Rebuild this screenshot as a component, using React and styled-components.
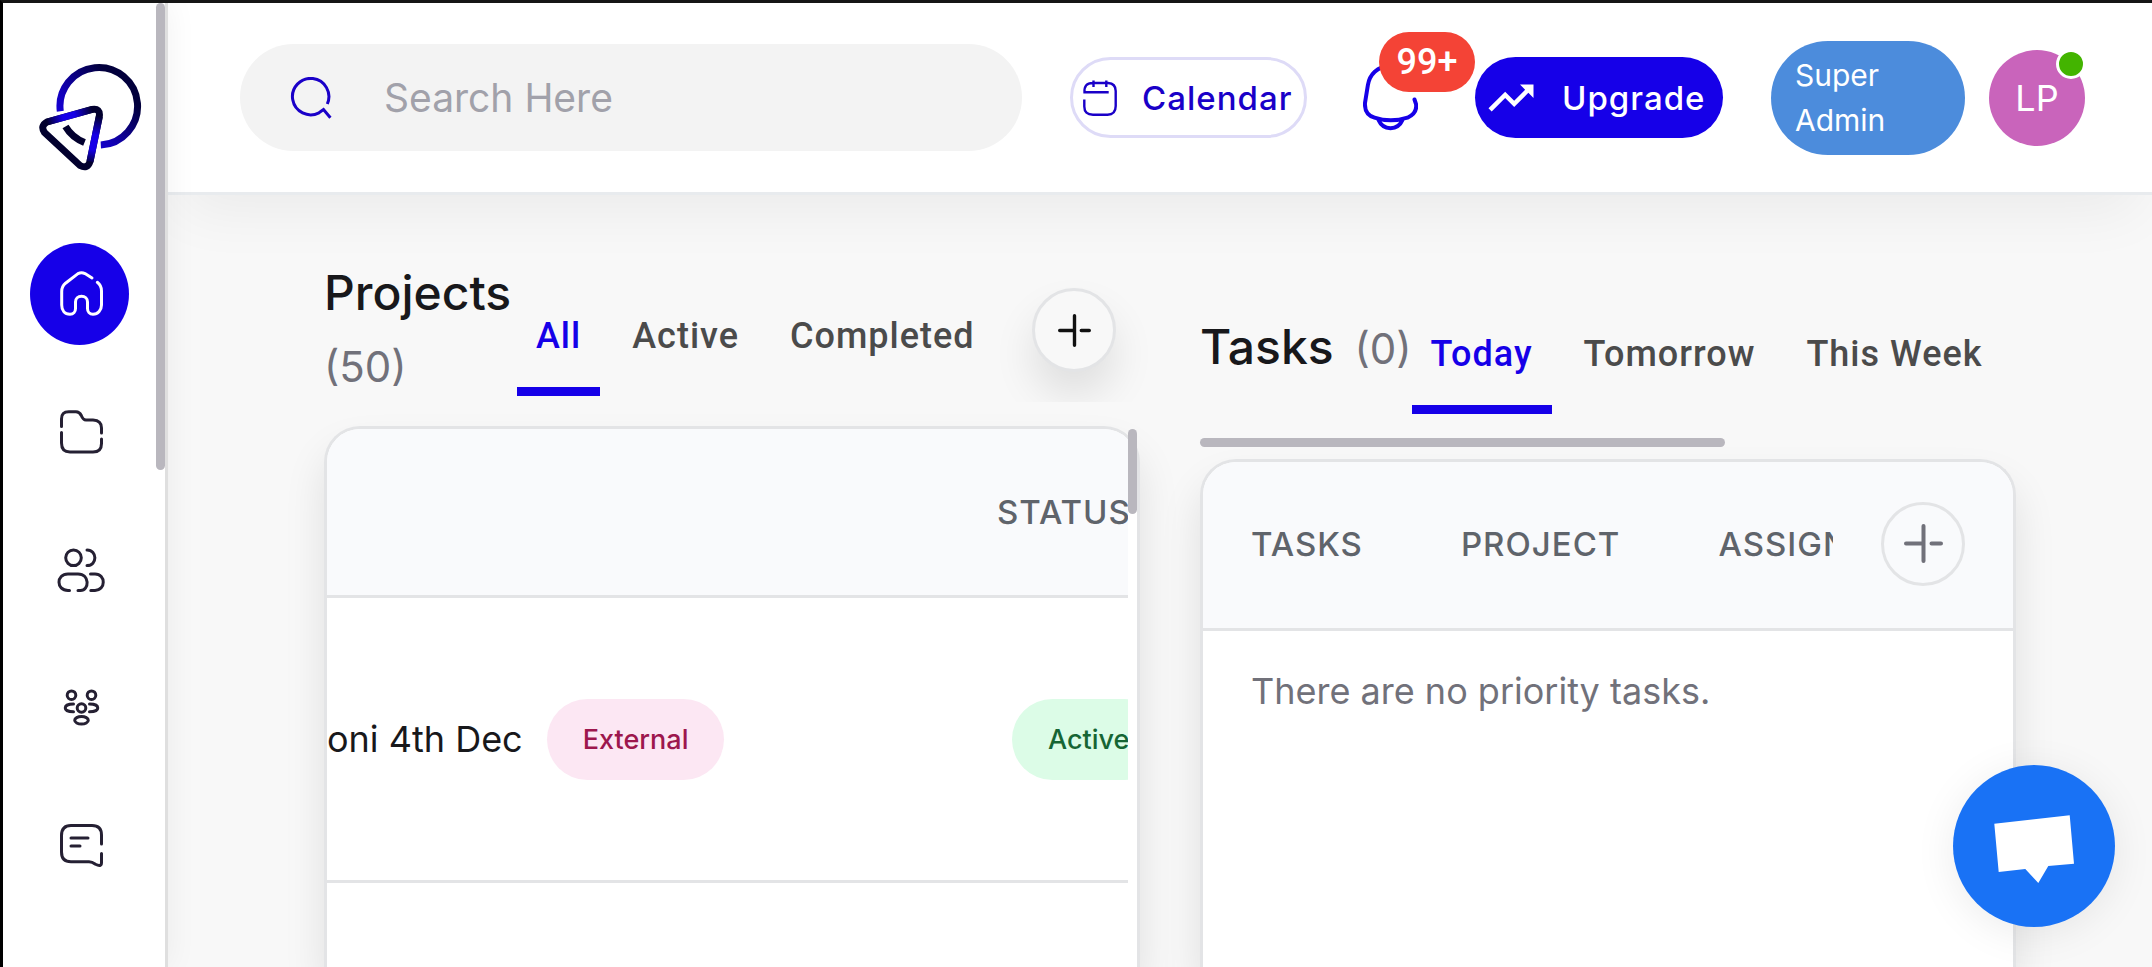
import React, { useState } from 'react';
import styled, { createGlobalStyle } from 'styled-components';

const projectTabs = ['All', 'Active', 'Completed'];
const taskTabs = ['Today', 'Tomorrow', 'This Week'];

const LogoIcon = () => (
  <svg width='132' height='108' viewBox='0 0 132 108' fill='none'>
    <defs>
      <linearGradient
        id='ring'
        gradientUnits='userSpaceOnUse'
        x1='52'
        y1='74'
        x2='112'
        y2='18'
      >
        <stop offset='0' stopColor='#1600e8' />
        <stop offset='0.35' stopColor='#1200b8' />
        <stop offset='0.9' stopColor='#02003c' />
      </linearGradient>
      <linearGradient
        id='topEdge'
        gradientUnits='userSpaceOnUse'
        x1='33'
        y1='59'
        x2='78'
        y2='46'
      >
        <stop offset='0' stopColor='#02002e' />
        <stop offset='0.35' stopColor='#1600e8' />
        <stop offset='0.6' stopColor='#1600e8' />
        <stop offset='1' stopColor='#02002e' />
      </linearGradient>
      <linearGradient
        id='rightEdge'
        gradientUnits='userSpaceOnUse'
        x1='85'
        y1='53'
        x2='75'
        y2='101'
      >
        <stop offset='0' stopColor='#02002e' />
        <stop offset='0.4' stopColor='#1600e8' />
        <stop offset='0.7' stopColor='#1600e8' />
        <stop offset='1' stopColor='#02002e' />
      </linearGradient>
    </defs>
    <path
      d='M46.3 48.3A38.8 38.8 0 1 1 86.8 82'
      stroke='url(#ring)'
      strokeWidth='7'
    />
    <path
      d='M33 59 78 46.5Q86.5 45 85.3 53.5L76 98.5Q73.5 106.5 66 102.5L30.5 69.5Q26 63 33 59Z'
      stroke='#02002e'
      strokeWidth='7'
    />
    <path d='M33 59 78 46.5' stroke='url(#topEdge)' strokeWidth='7' />
    <path d='M85.3 53.5 76 98.5' stroke='url(#rightEdge)' strokeWidth='7' />
    <path d='M51.5 63.5Q58 74.5 70.5 79.5' stroke='#02002e' strokeWidth='7' />
  </svg>
);

const HomeIcon = () => (
  <NavSvg viewBox='0 0 48 48'>
    <path d='M36 8 29 3.6Q25.5 1.8 22 3.6L9.5 13.2Q5.7 16.5 5.7 21.5V35C5.7 40 8.5 44.3 14 44.3 17.5 44.3 19.5 41.5 19.5 38.5V32C19.5 28.5 22 26.3 25.5 26.3 29 26.3 31.5 28.5 31.5 32V38.5C31.5 41.5 33.5 44.3 37 44.3 42 44.3 45.5 40 45.5 35V21Q45.5 15.5 41.3 12.3' />
  </NavSvg>
);

const FolderIcon = () => (
  <NavSvg viewBox='0 0 48 48'>
    <path d='M5.5 18.5V11Q5.5 3.7 12.8 3.7H20Q23.5 3.7 25.3 7.5 27 12 30 12H37Q45.5 12.5 45.5 20V25' />
    <path d='M45.5 31V35.5Q45.5 44 37 44H14Q5.5 44 5.5 35V24.5' />
  </NavSvg>
);

const PeopleIcon = () => (
  <NavSvg viewBox='0 0 48 48'>
    <circle cx='17.5' cy='11.8' r='7.8' />
    <path d='M31 4C41.5 4 41.5 19.6 31 19.6' />
    <path d='M13.5 44.4H12C0 44.4 0 28 12 28H22C34 28 33.5 44.4 24.5 44.4H22' />
    <path d='M34.5 28H39C50 28 50 44.4 39 44.4H34.8' />
  </NavSvg>
);

const GroupIcon = () => (
  <NavSvg viewBox='0 0 48 48'>
    <circle cx='15.5' cy='11.2' r='4.3' />
    <circle cx='35.5' cy='11.2' r='4.3' />
    <circle cx='25.5' cy='24' r='4.3' />
    <ellipse cx='25.5' cy='36.3' rx='6.8' ry='3.8' />
    <path d='M17.5 20C6.5 20 6.5 27.8 17.5 27.8' />
    <path d='M33.5 20C44.5 20 44.5 27.8 33.5 27.8' />
  </NavSvg>
);

const MessageIcon = () => (
  <NavSvg viewBox='0 0 48 48'>
    <path d='M45.5 22V13Q45.5 3.5 36 3.5H15Q5.5 3.5 5.5 13.5V30Q5.5 39.8 15 39.8H33Q36 39.8 39.5 42.3 45.5 45.5 45.5 40.5V31.5' />
    <path d='M15 16H32M15 24H24' />
  </NavSvg>
);

const SearchIcon = () => (
  <svg width='42' height='42' viewBox='0 0 42 42' fill='none' aria-hidden='true'>
    <path
      d='M37.3 27A18.2 18.2 0 1 0 29 35.8L33.5 32.5 40.4 40.7'
      stroke='#1a00c8'
      strokeWidth='3'
    />
  </svg>
);

const CalendarIcon = () => (
  <svg width='36' height='36' viewBox='-1 0 36 36' fill='none'>
    <path
      d='M25.7 12.3H1.5Q1 3 9.5 3H25Q32.7 3.5 32.7 11V26Q32.7 34.5 24.5 34.7H10Q1.3 34.7 1.3 26.5V19.5M10.5 0.5V7M23.3 0.5V7'
      stroke='currentColor'
      strokeWidth='2.4'
    />
  </svg>
);

const BellIcon = () => (
  <svg width='55' height='75' viewBox='0 0 55 75' fill='none'>
    <path
      d='M27.5 6C14 6 6.5 15 4.9 25L2 43Q1.3 54.5 11.5 57.7 27.5 63 44.5 57.7 54.5 53 53 44L51.5 39.5M15.5 60Q19 68 27.5 68.3 36 68 39.5 60'
      stroke='#1600e8'
      strokeWidth='4'
      strokeLinecap='round'
    />
  </svg>
);

const TrendingUpIcon = () => (
  <svg width='54' height='54' viewBox='0 0 24 24' fill='currentColor'>
    <path d='m16 6 2.29 2.29-4.88 4.88-4-4L2 16.59 3.41 18l6-6 4 4 6.3-6.29L22 12V6z' />
  </svg>
);

const PlusIcon = ({ size }) => (
  <svg width={size} height={size} viewBox='0 0 39 39' fill='none'>
    <path
      d='M19.5 2V37M2 19.5H19.5M27.5 19.5H37'
      stroke='currentColor'
      strokeWidth='4'
      strokeLinecap='round'
    />
  </svg>
);

const ChatIcon = () => (
  <svg width='162' height='162' viewBox='0 0 162 162' fill='#fff'>
    <path d='M41.3 58.7 116.7 50.3 121 98.7 95.3 101 85.3 118 72.3 104 45.7 107Z' />
  </svg>
);

const navItems = [
  { label: 'Home', icon: <HomeIcon /> },
  { label: 'Projects', icon: <FolderIcon /> },
  { label: 'Clients', icon: <PeopleIcon /> },
  { label: 'Teams', icon: <GroupIcon /> },
  { label: 'Messages', icon: <MessageIcon /> },
];

const Sidebar = () => (
  <SidebarBox>
    <SidebarInner>
      <LogoLink href='#' aria-label='Dashboard'>
        <LogoIcon />
      </LogoLink>
      <Nav>
        {navItems.map((item, index) => (
          <NavLink
            key={item.label}
            href='#'
            aria-label={item.label}
            $active={index === 0}
          >
            {item.icon}
          </NavLink>
        ))}
      </Nav>
    </SidebarInner>
    <SidebarTrack>
      <SidebarThumb />
    </SidebarTrack>
  </SidebarBox>
);

const Header = () => {
  const [search, setSearch] = useState('');

  return (
    <HeaderBox>
      <SearchBox>
        <SearchIcon />
        <SearchInput
          type='text'
          aria-label='Search'
          placeholder='Search Here'
          value={search}
          onChange={(event) => setSearch(event.target.value)}
        />
      </SearchBox>
      <CalendarBtn type='button'>
        <CalendarIcon />
        Calendar
      </CalendarBtn>
      <BellBtn type='button' aria-label='Notifications'>
        <BellIcon />
        <Badge>99+</Badge>
      </BellBtn>
      <UpgradeBtn type='button'>
        <TrendingUpIcon />
        Upgrade
      </UpgradeBtn>
      <Role>Super Admin</Role>
      <Avatar type='button'>
        LP
        <OnlineDot />
      </Avatar>
    </HeaderBox>
  );
};

const Tabs = ({ items }) => {
  const [selected, setSelected] = useState(items[0]);

  return (
    <TabList>
      {items.map((item) => (
        <Tab
          key={item}
          type='button'
          $active={item === selected}
          onClick={() => setSelected(item)}
        >
          {item}
        </Tab>
      ))}
    </TabList>
  );
};

const Projects = () => (
  <Panel>
    <ProjectsHead>
      <ProjectsTitle>
        Projects <Count>(50)</Count>
      </ProjectsTitle>
      <Tabs items={projectTabs} />
      <AddBtn type='button' aria-label='Add project' $raised>
        <PlusIcon size={33} />
      </AddBtn>
    </ProjectsHead>
    <CardArea>
      <Card>
        <TableClip>
          <ProjectTable>
            <colgroup>
              <col />
              <StatusCol />
            </colgroup>
            <thead>
              <tr>
                <HeadCell aria-label='Name' />
                <HeadCell>STATUS</HeadCell>
              </tr>
            </thead>
            <tbody>
              <tr>
                <Cell>
                  <NameBox>
                    oni 4th Dec
                    <Pill $color='#9d174d' $bg='#fce7f3'>
                      External
                    </Pill>
                  </NameBox>
                </Cell>
                <StatusCell>
                  <Pill $color='#166534' $bg='#dcfce7'>
                    Active
                  </Pill>
                </StatusCell>
              </tr>
            </tbody>
          </ProjectTable>
        </TableClip>
      </Card>
      <TableThumb />
    </CardArea>
  </Panel>
);

const Tasks = () => (
  <Panel>
    <TasksHead>
      <Title>
        Tasks <Count $spaced>(0)</Count>
      </Title>
      <Tabs items={taskTabs} />
    </TasksHead>
    <TasksThumb />
    <Card>
      <TasksBar>
        <ColumnsClip>
          <table>
            <thead>
              <tr>
                <TaskColumn>TASKS</TaskColumn>
                <TaskColumn>PROJECT</TaskColumn>
                <TaskColumn>ASSIGNEE</TaskColumn>
              </tr>
            </thead>
          </table>
        </ColumnsClip>
        <AddBtn type='button' aria-label='Add task'>
          <PlusIcon size={39} />
        </AddBtn>
      </TasksBar>
      <Empty>There are no priority tasks.</Empty>
    </Card>
  </Panel>
);

const App = () => (
  <>
    <GlobalStyle />
    <Page>
      <Sidebar />
      <Main>
        <Header />
        <Content>
          <Projects />
          <Tasks />
        </Content>
      </Main>
      <ChatBtn type='button' aria-label='Open chat'>
        <ChatIcon />
      </ChatBtn>
    </Page>
  </>
);

export default App;

const GlobalStyle = createGlobalStyle`
  * {
    box-sizing: border-box;
  }
  body {
    margin: 0;
    background: #f8f8f8;
    font-family: Inter, sans-serif;
  }
  button {
    margin: 0;
    padding: 0;
    border: 0;
    background: none;
    font-family: inherit;
    cursor: pointer;
  }
  table {
    border-spacing: 0;
  }
  svg {
    display: block;
    flex: none;
  }
`;

const Page = styled.div`
  display: flex;
  height: 100vh;
  overflow: hidden;
  border-top: 3px solid #151515;
  border-left: 3px solid #000;
`;

const SidebarBox = styled.aside`
  display: flex;
  flex: none;
  width: 165px;
  background: #fff;
  border-right: 3px solid #dfdfdf;
  box-shadow: 0 0 30px rgba(0, 0, 0, 0.06);
  z-index: 2;
`;

const SidebarInner = styled.div`
  flex: 1;
  display: flex;
  flex-direction: column;
  align-items: center;
  padding-top: 60px;
`;

const LogoLink = styled.a`
  display: block;
`;

const Nav = styled.nav`
  display: flex;
  flex-direction: column;
  gap: 36px;
  margin-top: 72px;
`;

const NavLink = styled.a`
  display: flex;
  align-items: center;
  justify-content: center;
  width: 99px;
  height: 102px;
  border-radius: 50%;
  color: ${(props) => (props.$active ? '#fff' : '#252033')};
  background: ${(props) => (props.$active ? '#1600e8' : 'transparent')};
`;

const NavSvg = styled.svg`
  width: 48px;
  height: 48px;
  overflow: visible;
  fill: none;
  stroke: currentColor;
  stroke-width: 3;
  stroke-linecap: round;
  stroke-linejoin: round;
`;

const SidebarTrack = styled.div`
  width: 9px;
`;

const SidebarThumb = styled.div`
  height: 467px;
  border-radius: 5px;
  background: #b9b7be;
`;

const Main = styled.main`
  flex: 1;
  min-width: 0;
  display: flex;
  flex-direction: column;
`;

const HeaderBox = styled.header`
  display: flex;
  align-items: center;
  height: 192px;
  padding: 0 67px 0 72px;
  background: #fff;
  border-bottom: 3px solid #e8ebee;
  box-shadow: 0 30px 60px -15px rgba(0, 0, 0, 0.06);
`;

const SearchBox = styled.div`
  flex: 1;
  min-width: 0;
  display: flex;
  align-items: center;
  gap: 52px;
  height: 107px;
  margin-right: 48px;
  padding: 0 50px;
  border-radius: 54px;
  background: #f3f3f3;
`;

const SearchInput = styled.input`
  flex: 1;
  min-width: 0;
  border: 0;
  outline: 0;
  padding: 0;
  background: transparent;
  font-family: inherit;
  font-size: 39px;
  color: #18181b;
  &::placeholder {
    color: #a1a1aa;
  }
`;

const HeaderBtn = styled.button`
  display: flex;
  align-items: center;
  gap: 24px;
  height: 81px;
  padding: 0 12px 0 9px;
  border-radius: 41px;
  font-size: 33px;
  font-weight: 500;
  letter-spacing: 1px;
`;

const CalendarBtn = styled(HeaderBtn)`
  width: 237px;
  color: #1a00c8;
  border: 3px solid #dedbf7;
`;

const UpgradeBtn = styled(HeaderBtn)`
  width: 248px;
  color: #fff;
  background: #1600e8;
`;

const BellBtn = styled.button`
  position: relative;
  margin: 0 57px 0 56px;
`;

const Badge = styled.span`
  position: absolute;
  left: 16px;
  top: -28px;
  width: 96px;
  border-radius: 30px;
  background: #f44336;
  color: #fff;
  font-family: Roboto, sans-serif;
  font-size: 36px;
  font-weight: 500;
  line-height: 60px;
  text-align: center;
`;

const Role = styled.span`
  width: 194px;
  margin-left: 48px;
  padding: 12px 24px;
  border-radius: 57px;
  background: #4c8cdc;
  color: #fff;
  font-size: 30px;
  line-height: 45px;
`;

const Avatar = styled.button`
  position: relative;
  width: 96px;
  height: 96px;
  margin-left: 24px;
  border-radius: 50%;
  background: #c964bb;
  color: #fff;
  font-size: 36px;
`;

const OnlineDot = styled.span`
  position: absolute;
  top: -1px;
  right: -1px;
  width: 30px;
  height: 30px;
  border: 3px solid #fff;
  border-radius: 50%;
  background: #43b400;
`;

const Content = styled.div`
  flex: 1;
  min-height: 0;
  display: grid;
  grid-template-columns: minmax(0, 1fr) minmax(0, 1fr);
  gap: 60px;
  padding: 63px 136px 0 156px;
`;

const Panel = styled.section`
  display: flex;
  flex-direction: column;
  min-height: 0;
`;

const ProjectsHead = styled.div`
  display: flex;
  align-items: center;
  height: 144px;
  margin-bottom: 24px;
  padding-right: 24px;
  clip-path: inset(0 -30px 0 0);
`;

const TasksHead = styled.div`
  display: flex;
  align-items: center;
  height: 180px;
`;

const Title = styled.h2`
  margin: 0;
  color: #18181b;
  font-size: 48px;
  font-weight: 500;
  line-height: 72px;
  white-space: nowrap;
`;

const ProjectsTitle = styled(Title)`
  flex: none;
  width: 193px;
  white-space: normal;
`;

const Count = styled.span`
  margin-left: ${(props) => (props.$spaced ? '8px' : '0')};
  color: #71717a;
  font-size: 42px;
  font-weight: 400;
`;

const TabList = styled.div`
  display: flex;
  gap: 13px;
`;

const Tab = styled.button`
  padding: 45px 19px 24px;
  border-bottom: 9px solid
    ${(props) => (props.$active ? '#1600e8' : 'transparent')};
  color: ${(props) => (props.$active ? '#1600e8' : '#4b4b4b')};
  font-family: Roboto, sans-serif;
  font-size: 36px;
  font-weight: 500;
  line-height: 54px;
  letter-spacing: 1px;
  white-space: nowrap;
`;

const AddBtn = styled.button`
  flex: none;
  display: flex;
  align-items: center;
  justify-content: center;
  width: 84px;
  height: 84px;
  margin-left: auto;
  border: 3px solid #e3e4e6;
  border-radius: 50%;
  color: ${(props) => (props.$raised ? '#111' : '#71717a')};
  background: ${(props) => (props.$raised ? '#f8f8f8' : 'transparent')};
  box-shadow: ${(props) =>
    props.$raised ? '0 24px 42px rgba(0, 0, 0, 0.1)' : 'none'};
`;

const CardArea = styled.div`
  position: relative;
  flex: 1;
  display: flex;
  flex-direction: column;
`;

const Card = styled.div`
  flex: 1;
  overflow: hidden;
  border: 3px solid #e3e4e6;
  border-bottom: 0;
  border-radius: 36px 36px 0 0;
  background: #fff;
  box-shadow: 0 24px 42px rgba(0, 0, 0, 0.1);
`;

const TableClip = styled.div`
  margin-right: 9px;
  overflow: hidden;
`;

/* wider than its clip, so the status column runs under the scrollbar */
const ProjectTable = styled.table`
  width: calc(100% + 69px);
  table-layout: fixed;
`;

const StatusCol = styled.col`
  width: 200px;
`;

const HeadCell = styled.th`
  height: 169px;
  padding: 0;
  border-bottom: 3px solid #e3e4e6;
  background: #f9fafc;
  color: #5f646b;
  font-size: 33px;
  font-weight: 500;
  letter-spacing: 1px;
  text-align: left;
`;

const Cell = styled.td`
  height: 285px;
  padding: 0;
  border-bottom: 3px solid #e3e4e6;
  color: #18181b;
  font-size: 36px;
`;

const StatusCell = styled(Cell)`
  padding-left: 15px;
`;

const NameBox = styled.div`
  display: flex;
  align-items: center;
  gap: 24px;
  white-space: nowrap;
`;

const Pill = styled.span`
  display: inline-block;
  padding: 0 36px;
  border-radius: 41px;
  background: ${(props) => props.$bg};
  color: ${(props) => props.$color};
  font-size: 27px;
  font-weight: 500;
  line-height: 81px;
`;

const TableThumb = styled.div`
  position: absolute;
  top: 3px;
  right: 3px;
  width: 9px;
  height: 85px;
  border-radius: 5px;
  background: #b9b7be;
`;

const TasksThumb = styled.div`
  flex: none;
  width: 525px;
  height: 9px;
  margin-bottom: 12px;
  border-radius: 5px;
  background: #b9b7be;
`;

const TasksBar = styled.div`
  display: flex;
  align-items: center;
  height: 169px;
  padding: 0 48px 3px;
  gap: 48px;
  border-bottom: 3px solid #e3e4e6;
  background: #f9fafc;
`;

const ColumnsClip = styled.div`
  flex: 1;
  min-width: 0;
  overflow: hidden;
`;

const TaskColumn = styled.th`
  padding: 0 98px 0 0;
  color: #5f646b;
  font-size: 33px;
  font-weight: 500;
  letter-spacing: 1px;
  white-space: nowrap;
`;

const Empty = styled.p`
  margin: 0;
  padding: 33px 48px;
  color: #71717a;
  font-size: 36px;
  line-height: 54px;
`;

const ChatBtn = styled.button`
  position: fixed;
  right: 37px;
  bottom: 40px;
  width: 162px;
  height: 162px;
  border-radius: 50%;
  background: #1972f5;
  box-shadow: 0 6px 42px rgba(0, 0, 0, 0.08);
  z-index: 3;
`;
